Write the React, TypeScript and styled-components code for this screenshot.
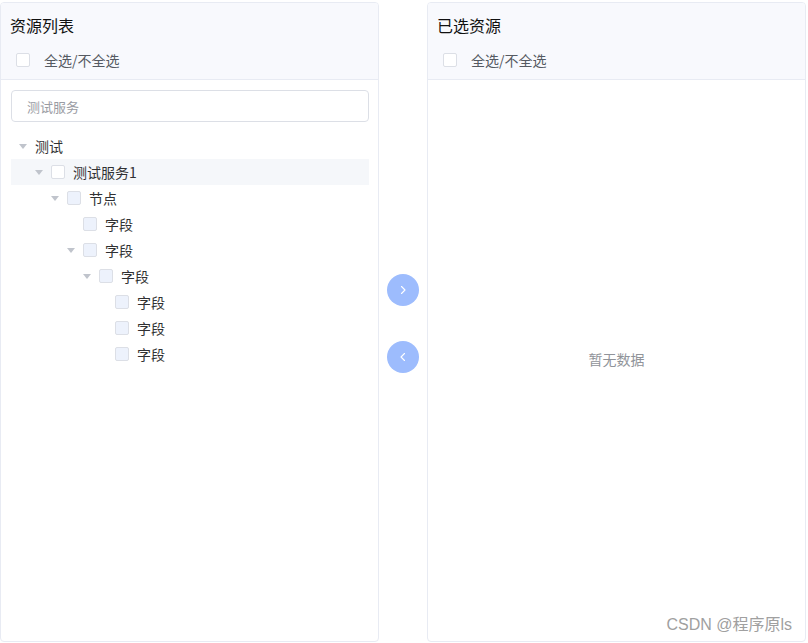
import styled, { createGlobalStyle } from "styled-components";

const GlobalStyle = createGlobalStyle`
  body {
    margin: 0;
    font-family: "Noto Sans CJK SC", "Noto Sans", sans-serif;
    background: #fff;
  }
`;

type Node = { label: string; children?: Node[]; checkbox?: boolean; disabled?: boolean; active?: boolean };

const tree: Node[] = [
  {
    label: "测试",
    checkbox: false,
    children: [
      {
        label: "测试服务1",
        active: true,
        children: [
          {
            label: "节点",
            disabled: true,
            children: [
              { label: "字段", disabled: true },
              {
                label: "字段",
                disabled: true,
                children: [
                  {
                    label: "字段",
                    disabled: true,
                    children: [
                      { label: "字段", disabled: true },
                      { label: "字段", disabled: true },
                      { label: "字段", disabled: true },
                    ],
                  },
                ],
              },
            ],
          },
        ],
      },
    ],
  },
];

const renderNodes = (nodes: Node[], level: number): React.ReactNode[] =>
  nodes.flatMap((n, i) => [
    <TreeRow key={`${level}-${i}-${n.label}`} $level={level} $active={n.active}>
      <Caret $visible={!!n.children} />
      {n.checkbox !== false && <Check $disabled={n.disabled} />}
      <NodeLabel>{n.label}</NodeLabel>
    </TreeRow>,
    ...(n.children ? renderNodes(n.children, level + 1) : []),
  ]);

export default function App() {
  return (
    <>
      <GlobalStyle />
      <Page>
        <Panel>
          <PanelHeader>
            <Title>资源列表</Title>
            <CheckRow>
              <Check />
              <CheckText>全选/不全选</CheckText>
            </CheckRow>
          </PanelHeader>
          <PanelBody>
            <SearchInput placeholder="测试服务" />
            <Tree>{renderNodes(tree, 0)}</Tree>
          </PanelBody>
        </Panel>

        <Actions>
          <RoundButton>
            <svg width="12" height="12" viewBox="0 0 12 12" fill="none">
              <path d="M4.5 2.5 8 6l-3.5 3.5" stroke="#fff" strokeWidth="1.1" strokeLinecap="round" strokeLinejoin="round" />
            </svg>
          </RoundButton>
          <RoundButton>
            <svg width="12" height="12" viewBox="0 0 12 12" fill="none">
              <path d="M7.5 2.5 4 6l3.5 3.5" stroke="#fff" strokeWidth="1.1" strokeLinecap="round" strokeLinejoin="round" />
            </svg>
          </RoundButton>
        </Actions>

        <Panel>
          <PanelHeader>
            <Title>已选资源</Title>
            <CheckRow>
              <Check />
              <CheckText>全选/不全选</CheckText>
            </CheckRow>
          </PanelHeader>
          <EmptyBody>
            <EmptyText>暂无数据</EmptyText>
          </EmptyBody>
        </Panel>
        <Watermark>CSDN @程序原ls</Watermark>
      </Page>
    </>
  );
}

const Page = styled.div`
  position: relative;
  display: flex;
  padding-top: 2px;
  width: 806px;
  height: 641px;
`;

const Panel = styled.div`
  width: 377px;
  height: 638px;
  border: 1px solid #e8ebf3;
  border-radius: 4px;
  display: flex;
  flex-direction: column;
  overflow: hidden;
`;

const PanelHeader = styled.div`
  background: #f8f9fd;
  border-bottom: 1px solid #e8ebf3;
  height: 77px;
  box-sizing: border-box;
  padding: 12px 0 0 9px;
`;

const Title = styled.div`
  font-size: 16px;
  color: #111;
  line-height: 20px;
`;

const CheckRow = styled.div`
  display: flex;
  align-items: center;
  margin-top: 17px;
  padding-left: 6px;
  height: 16px;
`;

const CheckText = styled.span`
  font-size: 14px;
  color: #555a62;
  margin-left: 6px;
`;

const Check = styled.span<{ $disabled?: boolean }>`
  display: inline-block;
  width: 14px;
  height: 14px;
  box-sizing: border-box;
  border: 1px solid #dcdfe6;
  border-radius: 2px;
  background: ${(p) => (p.$disabled ? "#edf2fc" : "#fff")};
  margin-right: 8px;
  flex-shrink: 0;
`;

const PanelBody = styled.div`
  padding: 10px 9px 0 10px;
`;

const SearchInput = styled.input`
  display: block;
  width: 100%;
  height: 32px;
  box-sizing: border-box;
  border: 1px solid #dcdfe6;
  border-radius: 4px;
  padding: 0 15px;
  font-family: inherit;
  font-size: 13px;
  outline: none;
  &::placeholder {
    color: #9a9ca3;
  }
`;

const Tree = styled.div`
  margin-top: 11px;
`;

const TreeRow = styled.div<{ $level: number; $active?: boolean }>`
  display: flex;
  align-items: center;
  height: 26px;
  padding-left: ${(p) => p.$level * 16}px;
  background: ${(p) => (p.$active ? "#f5f7fa" : "transparent")};
`;

const Caret = styled.span<{ $visible: boolean }>`
  width: 24px;
  height: 26px;
  display: flex;
  align-items: center;
  justify-content: center;
  &::before {
    content: "";
    display: ${(p) => (p.$visible ? "block" : "none")};
    border-left: 4px solid transparent;
    border-right: 4px solid transparent;
    border-top: 5px solid #c0c4cc;
  }
`;

const NodeLabel = styled.span`
  font-size: 14px;
  color: #303133;
`;

const Actions = styled.div`
  width: 48px;
  display: flex;
  flex-direction: column;
  align-items: center;
  justify-content: center;
  gap: 35px;
  padding-top: 1px;
`;

const RoundButton = styled.button`
  width: 32px;
  height: 32px;
  border-radius: 50%;
  border: none;
  padding: 0;
  background: #9dbcfd;
  display: flex;
  align-items: center;
  justify-content: center;
`;

const EmptyBody = styled.div`
  flex: 1;
  display: flex;
  align-items: center;
  justify-content: center;
  padding-bottom: 4px;
`;

const EmptyText = styled.span`
  font-size: 14px;
  color: #909399;
`;

const Watermark = styled.div`
  position: absolute;
  right: 14px;
  bottom: 8px;
  font-family: "Liberation Sans", "Noto Sans CJK SC", sans-serif;
  font-size: 16px;
  color: #a0a0a0;
  text-shadow: 0 0 2px #fff;
`;
